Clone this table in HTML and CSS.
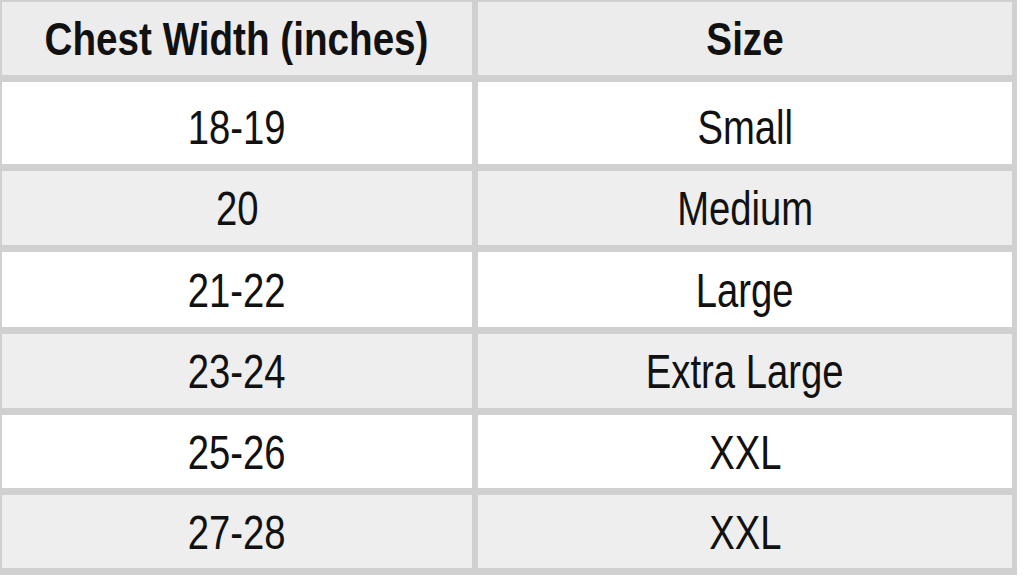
FILE: index.html
```html
<!DOCTYPE html>
<html>
<head>
<meta charset="utf-8">
<link rel="stylesheet" href="styles.css">
</head>
<body>
<div class="page">
  <div class="table">
    <div class="cell head"><span class="txt">Chest Width (inches)</span></div>
    <div class="cell head"><span class="txt">Size</span></div>
    <div class="cell white first"><span class="txt">18-19</span></div>
    <div class="cell white first"><span class="txt">Small</span></div>
    <div class="cell gray"><span class="txt">20</span></div>
    <div class="cell gray"><span class="txt">Medium</span></div>
    <div class="cell white"><span class="txt">21-22</span></div>
    <div class="cell white"><span class="txt">Large</span></div>
    <div class="cell gray"><span class="txt">23-24</span></div>
    <div class="cell gray"><span class="txt">Extra Large</span></div>
    <div class="cell white"><span class="txt">25-26</span></div>
    <div class="cell white"><span class="txt">XXL</span></div>
    <div class="cell gray"><span class="txt">27-28</span></div>
    <div class="cell gray"><span class="txt">XXL</span></div>
  </div>
</div>
</body>
</html>
```
FILE: styles.css
```css
html, body {
  margin: 0;
  padding: 0;
  background: #ffffff;
}
.page {
  width: 1024px;
  height: 576px;
  overflow: hidden;
  background: #ffffff;
}
.table {
  width: 1017px;
  box-sizing: border-box;
  background: #d0d0d0;
  padding: 2px 5px 7px 2px;
  display: grid;
  grid-template-columns: 470px 534px;
  grid-template-rows: 73px 82px 74px 75px 74px 73px 73px;
  column-gap: 6px;
  row-gap: 7px;
}
.cell {
  display: flex;
  align-items: center;
  justify-content: center;
  box-sizing: border-box;
  font-family: "Liberation Sans", Arial, sans-serif;
  color: #111111;
  font-size: 49px;
}
.cell .txt {
  display: inline-block;
  white-space: nowrap;
  transform: scaleX(0.78);
}
.head {
  background: #ececec;
  font-weight: bold;
  font-size: 46px;
}
.head .txt {
  transform: scaleX(0.84);
}
.white {
  background: #ffffff;
}
.gray {
  background: #eeeeee;
}
.first {
  padding-top: 8px;
}
```
